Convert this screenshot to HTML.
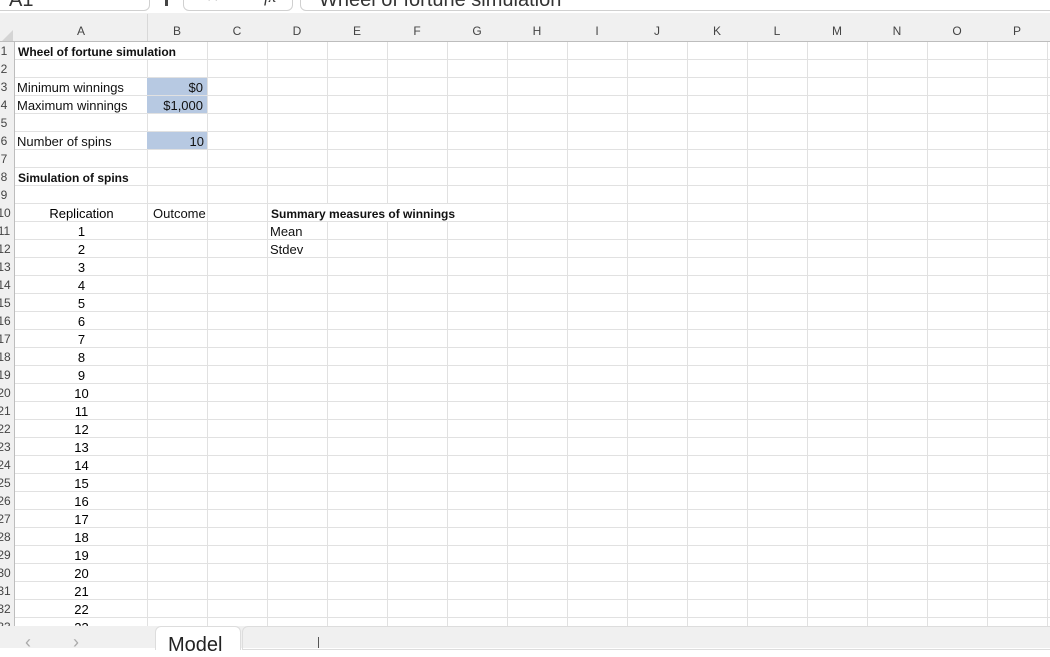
<!DOCTYPE html>
<html><head><meta charset="utf-8"><style>
*{margin:0;padding:0;box-sizing:border-box}
body{width:1050px;height:648px;overflow:hidden;background:#fff;font-family:"Liberation Sans",sans-serif;position:relative}
.abs{position:absolute}
.box{position:absolute;top:-20px;height:31px;border:1px solid #d0d0d0;border-radius:6px;background:#fff}
#colhdr{left:0;top:13px;width:1050px;height:29px;background:#f0f0f0;border-bottom:1px solid #bdbdbd}
.ch{position:absolute;top:24px;font-size:12px;color:#444;text-align:center;width:60px}
#rowhdr{left:0;top:42px;width:15px;height:584px;background:#f0f0f0;border-right:1px solid #bdbdbd;overflow:hidden}
.rh{position:absolute;left:-10px;width:28px;text-align:center;font-size:12px;color:#444;line-height:19px;height:18px;white-space:nowrap}
#grid{left:15px;top:42px;width:1035px;height:584px;
background:
repeating-linear-gradient(to bottom,transparent 0 17px,#e1e1e1 17px 18px),
linear-gradient(to right,transparent 0 132px,#e1e1e1 132px 133px,transparent 133px);
}
.vl{position:absolute;top:42px;width:1px;height:584px;background:#e1e1e1}
.c{position:absolute;font-size:13px;line-height:17px;height:17px;color:#111;white-space:nowrap;padding-top:1px;line-height:18px}
.b{font-weight:bold;font-size:12px}
.w{background:#fff}
.blue{position:absolute;left:147px;width:60px;height:17px;background:#b7c9e2}
.n{position:absolute;left:15px;width:133px;text-align:center;font-size:13px;line-height:19px}
#tabs{left:0;top:626px;width:1050px;height:22px;background:#f0f0f0}
</style></head><body>
<div class="box" style="left:-10px;width:160px"><span class="abs" style="left:18px;top:8px;font-size:20px;color:#333">A1</span><span class="abs" style="left:140px;top:10px;font-size:10px;color:#555">⌄</span></div>
<div class="abs" style="left:165px;top:0;width:3px;height:6px;background:#444"></div>
<div class="box" style="left:183px;width:110px"><span class="abs" style="left:22px;top:6px;font-size:16px;color:#bbb">✕</span><span class="abs" style="left:50px;top:6px;font-size:14px;color:#bbb">✓</span><span class="abs" style="left:80px;top:6px;font-size:17px;font-style:italic;font-family:'Liberation Serif',serif;color:#333">fx</span></div>
<div class="box" style="left:300px;width:780px"><span class="abs" style="left:18px;top:8px;font-size:20px;color:#333">Wheel of fortune simulation</span></div>
<div id="colhdr" class="abs"></div>
<div class="abs" style="left:2px;top:30px;width:0;height:0;border-left:11px solid transparent;border-bottom:11px solid #d4d4d4"></div>
<div class="ch" style="left:51px">A</div><div class="ch" style="left:147px">B</div><div class="ch" style="left:207px">C</div><div class="ch" style="left:267px">D</div><div class="ch" style="left:327px">E</div><div class="ch" style="left:387px">F</div><div class="ch" style="left:447px">G</div><div class="ch" style="left:507px">H</div><div class="ch" style="left:567px">I</div><div class="ch" style="left:627px">J</div><div class="ch" style="left:687px">K</div><div class="ch" style="left:747px">L</div><div class="ch" style="left:807px">M</div><div class="ch" style="left:867px">N</div><div class="ch" style="left:927px">O</div><div class="ch" style="left:987px">P</div>
<div class="abs" style="left:147px;top:14px;width:1px;height:27px;background:#d8d8d8"></div>
<div id="grid" class="abs"></div>
<div class="blue" style="top:78px"></div><div class="blue" style="top:96px"></div><div class="blue" style="top:132px"></div>
<div class="vl" style="left:207px"></div><div class="vl" style="left:267px"></div><div class="vl" style="left:327px"></div><div class="vl" style="left:387px"></div><div class="vl" style="left:447px"></div><div class="vl" style="left:507px"></div><div class="vl" style="left:567px"></div><div class="vl" style="left:627px"></div><div class="vl" style="left:687px"></div><div class="vl" style="left:747px"></div><div class="vl" style="left:807px"></div><div class="vl" style="left:867px"></div><div class="vl" style="left:927px"></div><div class="vl" style="left:987px"></div><div class="vl" style="left:1047px"></div>
<div id="rowhdr" class="abs">
<div class="rh" style="top:0">1</div><div class="rh" style="top:18px">2</div><div class="rh" style="top:36px">3</div><div class="rh" style="top:54px">4</div><div class="rh" style="top:72px">5</div><div class="rh" style="top:90px">6</div><div class="rh" style="top:108px">7</div><div class="rh" style="top:126px">8</div><div class="rh" style="top:144px">9</div><div class="rh" style="top:162px">10</div><div class="rh" style="top:180px">11</div><div class="rh" style="top:198px">12</div><div class="rh" style="top:216px">13</div><div class="rh" style="top:234px">14</div><div class="rh" style="top:252px">15</div><div class="rh" style="top:270px">16</div><div class="rh" style="top:288px">17</div><div class="rh" style="top:306px">18</div><div class="rh" style="top:324px">19</div><div class="rh" style="top:342px">20</div><div class="rh" style="top:360px">21</div><div class="rh" style="top:378px">22</div><div class="rh" style="top:396px">23</div><div class="rh" style="top:414px">24</div><div class="rh" style="top:432px">25</div><div class="rh" style="top:450px">26</div><div class="rh" style="top:468px">27</div><div class="rh" style="top:486px">28</div><div class="rh" style="top:504px">29</div><div class="rh" style="top:522px">30</div><div class="rh" style="top:540px">31</div><div class="rh" style="top:558px">32</div><div class="rh" style="top:576px">33</div>
</div>
<div class="c b w" style="left:16px;top:42px;padding-left:2px;padding-right:4px">Wheel of fortune simulation</div>
<div class="c" style="left:17px;top:78px">Minimum winnings</div>
<div class="c" style="left:17px;top:96px">Maximum winnings</div>
<div class="c" style="left:147px;top:78px;width:56px;text-align:right">$0</div>
<div class="c" style="left:147px;top:96px;width:56px;text-align:right">$1,000</div>
<div class="c" style="left:17px;top:132px">Number of spins</div>
<div class="c" style="left:147px;top:132px;width:57px;text-align:right">10</div>
<div class="c b" style="left:18px;top:168px">Simulation of spins</div>
<div class="n" style="top:204px">Replication</div>
<div class="c" style="left:153px;top:204px">Outcome</div>
<div class="c b w" style="left:268px;top:204px;padding-left:3px;padding-right:6px">Summary measures of winnings</div>
<div class="c" style="left:270px;top:222px">Mean</div>
<div class="c" style="left:270px;top:240px">Stdev</div>
<div class="n" style="top:222px">1</div><div class="n" style="top:240px">2</div><div class="n" style="top:258px">3</div><div class="n" style="top:276px">4</div><div class="n" style="top:294px">5</div><div class="n" style="top:312px">6</div><div class="n" style="top:330px">7</div><div class="n" style="top:348px">8</div><div class="n" style="top:366px">9</div><div class="n" style="top:384px">10</div><div class="n" style="top:402px">11</div><div class="n" style="top:420px">12</div><div class="n" style="top:438px">13</div><div class="n" style="top:456px">14</div><div class="n" style="top:474px">15</div><div class="n" style="top:492px">16</div><div class="n" style="top:510px">17</div><div class="n" style="top:528px">18</div><div class="n" style="top:546px">19</div><div class="n" style="top:564px">20</div><div class="n" style="top:582px">21</div><div class="n" style="top:600px">22</div><div class="n" style="top:618px">23</div>
<div id="tabs" class="abs">
<span class="abs" style="left:25px;top:6px;font-size:18px;color:#aaa">‹</span>
<span class="abs" style="left:73px;top:6px;font-size:18px;color:#aaa">›</span>
<div class="abs" style="left:155px;top:0;width:86px;height:24px;background:#fff;border-radius:6px 6px 0 0;border:1px solid #ddd;border-bottom:none"><span class="abs" style="left:12px;top:7px;font-size:20px;color:#222">Model</span></div>
<div class="abs" style="left:242px;top:0;width:820px;height:24px;border:1px solid #ddd;border-radius:6px 6px 0 0"></div>
<div class="abs" style="left:318px;top:11px;width:1px;height:11px;background:#555"></div>
</div>
</body></html>
